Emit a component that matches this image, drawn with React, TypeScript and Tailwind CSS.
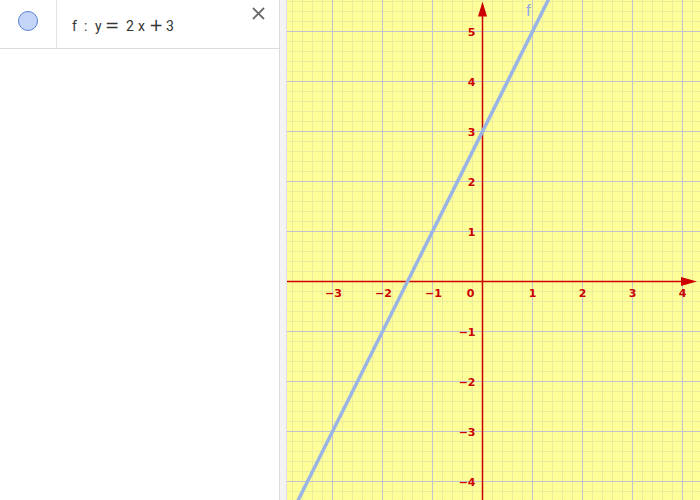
import React from 'react';

// graph geometry (svg starts at page x = 287)
const W = 413;
const H = 500;
const OX = 195.5; // y-axis
const OY = 281.5; // x-axis
const UNIT = 50;
const RED = '#cc0000';

const minorX: number[] = [];
for (let x = OX - 200; x < W; x += 10) if (x > 0) minorX.push(x);
const minorY: number[] = [];
for (let y = OY - 290; y < H; y += 10) if (y > 0) minorY.push(y);

const majorX = [-3, -2, -1, 1, 2, 3, 4];
const majorY = [5, 4, 3, 2, 1, -1, -2, -3, -4];

// f(x) = 2x + 3 in pixel space
const toPx = (x: number) => OX + x * UNIT;
const toPy = (y: number) => OY - y * UNIT;
const yTop = (0 - OY) / -UNIT;
const yBot = (H - OY) / -UNIT;
const x1 = (yTop - 3) / 2;
const x2 = (yBot - 3) / 2;

function Graph() {
  return (
    <svg width={W} height={H} className="block" style={{ fontFamily: '"DejaVu Sans", sans-serif' }}>
      <rect x={0} y={0} width={W} height={H} fill="#ffff99" />
      {minorX.map((x) => (
        <line key={'mx' + x} x1={x} y1={0} x2={x} y2={H} stroke="#ebeba0" strokeWidth={1} />
      ))}
      {minorY.map((y) => (
        <line key={'my' + y} x1={0} y1={y} x2={W} y2={y} stroke="#ebeba0" strokeWidth={1} />
      ))}
      {majorX.map((k) => (
        <line key={'gx' + k} x1={toPx(k)} y1={0} x2={toPx(k)} y2={H} stroke="#c3c3cf" strokeWidth={1} />
      ))}
      {majorY.map((k) => (
        <line key={'gy' + k} x1={0} y1={toPy(k)} x2={W} y2={toPy(k)} stroke="#c3c3cf" strokeWidth={1} />
      ))}

      {/* axes */}
      <line x1={0} y1={OY} x2={W - 16} y2={OY} stroke={RED} strokeWidth={1.5} />
      <line x1={OX} y1={16} x2={OX} y2={H} stroke={RED} strokeWidth={1.5} />
      <polygon points={`${W - 3},${OY} ${W - 19},${OY - 4.5} ${W - 19},${OY + 4.5}`} fill={RED} />
      <polygon points={`${OX},1.5 ${OX - 4.5},16.5 ${OX + 4.5},16.5`} fill={RED} />

      {/* tick labels */}
      <g fill={RED} fontSize={11} fontWeight={700}>
        {majorX.map((k) => (
          <text key={'lx' + k} x={toPx(k) + (k < 0 ? 1 : 0)} y={OY + 15.5} textAnchor="middle">
            {k < 0 ? '\u2212' + Math.abs(k) : k}
          </text>
        ))}
        <text x={OX - 8} y={OY + 15.5} textAnchor="end">0</text>
        {majorY.map((k) => (
          <text key={'ly' + k} x={OX - 7} y={toPy(k) + 4.5} textAnchor="end">
            {k < 0 ? '\u2212' + Math.abs(k) : k}
          </text>
        ))}
      </g>

      {/* function f */}
      <line
        x1={toPx(x1)}
        y1={0}
        x2={toPx(x2)}
        y2={H}
        stroke="#9ab4e6"
        strokeWidth={3.5}
        strokeLinecap="round"
      />
      <text x={239} y={16} fill="#93ace0" fontSize={17} style={{ fontFamily: '"Liberation Sans", sans-serif' }}>
        f
      </text>
    </svg>
  );
}

export default function App() {
  return (
    <div className="flex w-[700px] h-[500px] overflow-hidden bg-white">
      {/* Algebra view */}
      <div className="w-[280px] h-full border-r border-[#dadada] bg-white">
        <div className="flex h-[49px] border-b border-[#dcdcdc]">
          <div className="w-[57px] h-full border-r border-[#e2e2e2] flex justify-center pt-[11px] pr-[1px]">
            <div className="w-[20px] h-[20px] rounded-full bg-[#c5d5f8] border border-[#5b80d2]" />
          </div>
          <div
            className="flex-1 flex items-baseline pt-[17px] pl-[15px] text-[14px] text-[#333] leading-none"
            style={{ fontFamily: 'Roboto, "Noto Sans", sans-serif' }}
          >
            <span className="w-[12px]">f</span>
            <span className="w-[11px]">:</span>
            <span className="w-[11px]">y</span>
            <span className="w-[21px] text-[17px] leading-none font-['DejaVu_Sans',sans-serif] -ml-[1px]">=</span>
            <span className="w-[12px]">2</span>
            <span className="w-[12px]">x</span>
            <span className="w-[17px] text-[17px] leading-none font-['DejaVu_Sans',sans-serif] -ml-[1px]">+</span>
            <span>3</span>
          </div>
          <div className="w-[28px] h-full flex justify-start pt-[7px] pl-[1px]">
            <svg width="13" height="13" viewBox="0 0 13 13">
              <path d="M1 1 L12 12 M12 1 L1 12" stroke="#6b6b6b" strokeWidth="1.8" />
            </svg>
          </div>
        </div>
      </div>
      {/* splitter */}
      <div className="w-[6px] h-full bg-[#f3f3f3] border-r border-[#dedee6] box-content" />
      {/* Graphics view */}
      <div className="flex-1 h-full">
        <Graph />
      </div>
    </div>
  );
}
